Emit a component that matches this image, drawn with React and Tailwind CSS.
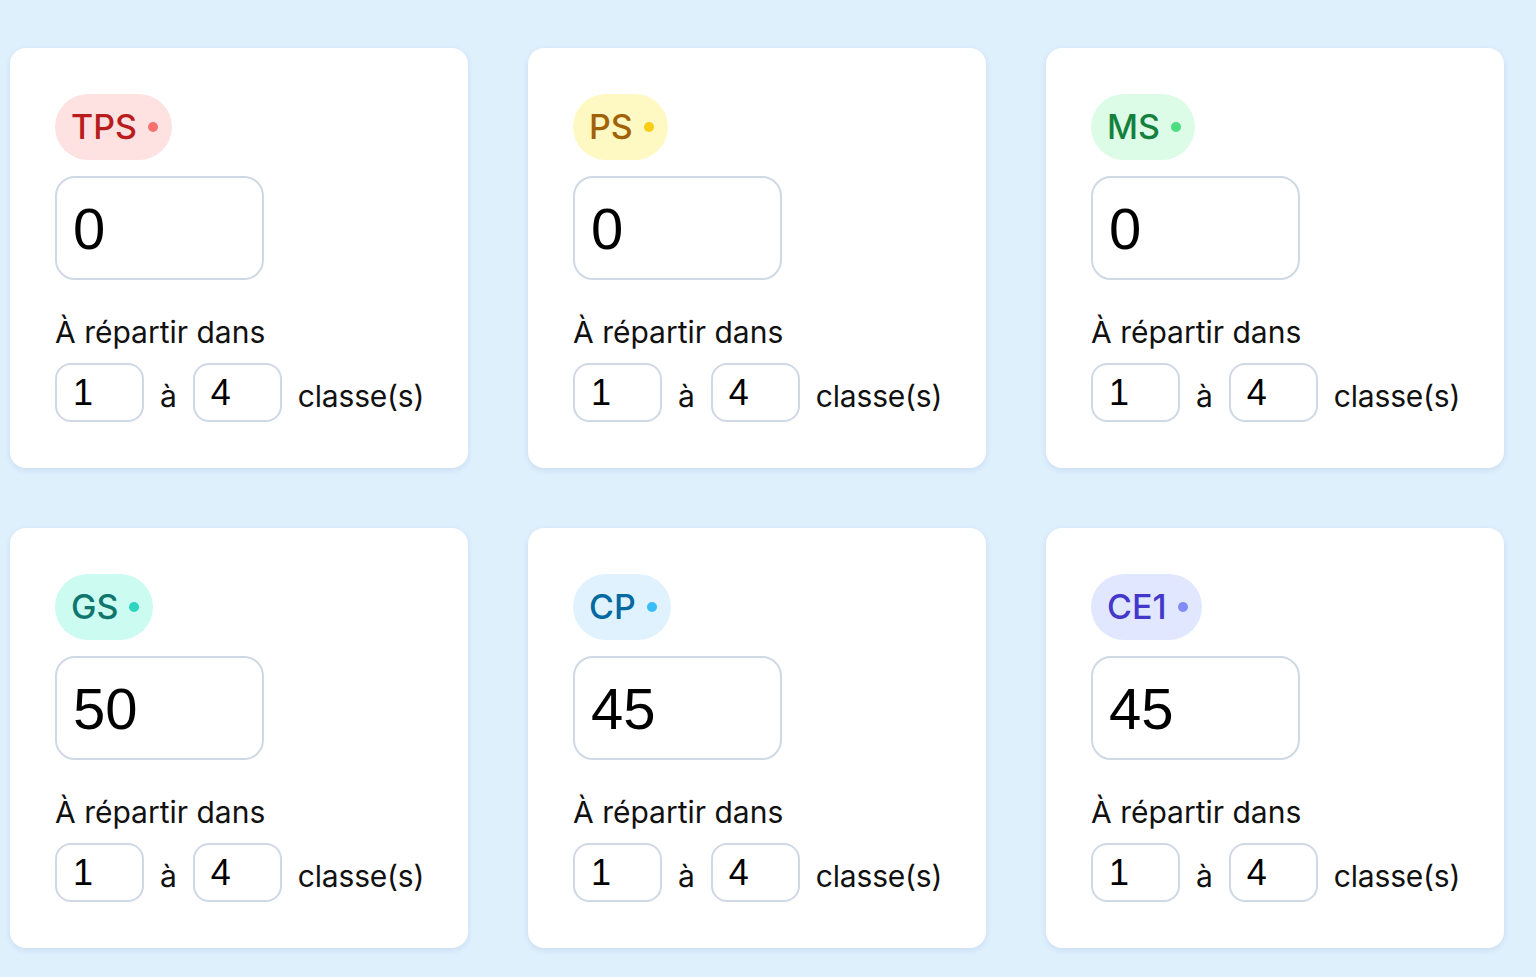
import React from "react";

const levels = [
  { name: "TPS", value: "0", bg: "bg-[#fee2e2]", text: "text-[#b91c1c]", dot: "bg-[#f87171]" },
  { name: "PS", value: "0", bg: "bg-[#fef9c3]", text: "text-[#a16207]", dot: "bg-[#facc15]" },
  { name: "MS", value: "0", bg: "bg-[#dcfce7]", text: "text-[#15803d]", dot: "bg-[#4ade80]" },
  { name: "GS", value: "50", bg: "bg-[#ccfbf1]", text: "text-[#0f766e]", dot: "bg-[#2dd4bf]" },
  { name: "CP", value: "45", bg: "bg-[#e0f2fe]", text: "text-[#0369a1]", dot: "bg-[#38bdf8]" },
  { name: "CE1", value: "45", bg: "bg-[#e0e7ff]", text: "text-[#4338ca]", dot: "bg-[#818cf8]" },
];

function Card({ level }) {
  return (
    <div className="bg-white rounded-[16px] shadow-[0_2px_6px_rgba(100,140,180,0.18)] pt-[46px] pb-[46px] px-[45px] flex flex-col items-start">
      <span
        className={`inline-flex items-center h-[66px] pl-[16px] pr-[14px] rounded-full ${level.bg} ${level.text} text-[34px] font-medium font-['Inter',sans-serif] leading-none`}
      >
        {level.name}
        <span className={`ml-[11px] w-[10px] h-[10px] rounded-full ${level.dot}`} />
      </span>
      <input
        readOnly
        value={level.value}
        className="mt-[16px] w-[209px] h-[104px] rounded-[20px] border-2 border-[#cfd9e6] pl-[16px] text-[58px] text-black font-['Liberation_Sans',Arial,sans-serif] outline-none bg-white"
      />
      <div className="mt-[34px] text-[30px] leading-[36px] text-[#111111] font-['Inter',sans-serif]">
        À répartir dans
      </div>
      <div className="mt-[13px] flex items-center font-['Inter',sans-serif] text-[30px] text-[#111111]">
        <input
          readOnly
          value="1"
          className="w-[89px] h-[59px] rounded-[16px] border-2 border-[#cfd9e6] pl-[16px] text-[36px] text-black font-['Liberation_Sans',Arial,sans-serif] outline-none bg-white"
        />
        <span className="mx-[16px] mt-[7px]">à</span>
        <input
          readOnly
          value="4"
          className="w-[89px] h-[59px] rounded-[16px] border-2 border-[#cfd9e6] pl-[16px] text-[36px] text-black font-['Liberation_Sans',Arial,sans-serif] outline-none bg-white"
        />
        <span className="ml-[16px] mt-[7px] tracking-[-0.2px]">classe(s)</span>
      </div>
    </div>
  );
}

export default function App() {
  return (
    <div className="min-h-[977px] w-full bg-[#dff0fd] pt-[48px] pl-[10px] overflow-hidden">
      <div className="grid grid-cols-[repeat(3,458px)] gap-[60px]">
        {levels.map((l) => (
          <Card key={l.name} level={l} />
        ))}
      </div>
    </div>
  );
}
